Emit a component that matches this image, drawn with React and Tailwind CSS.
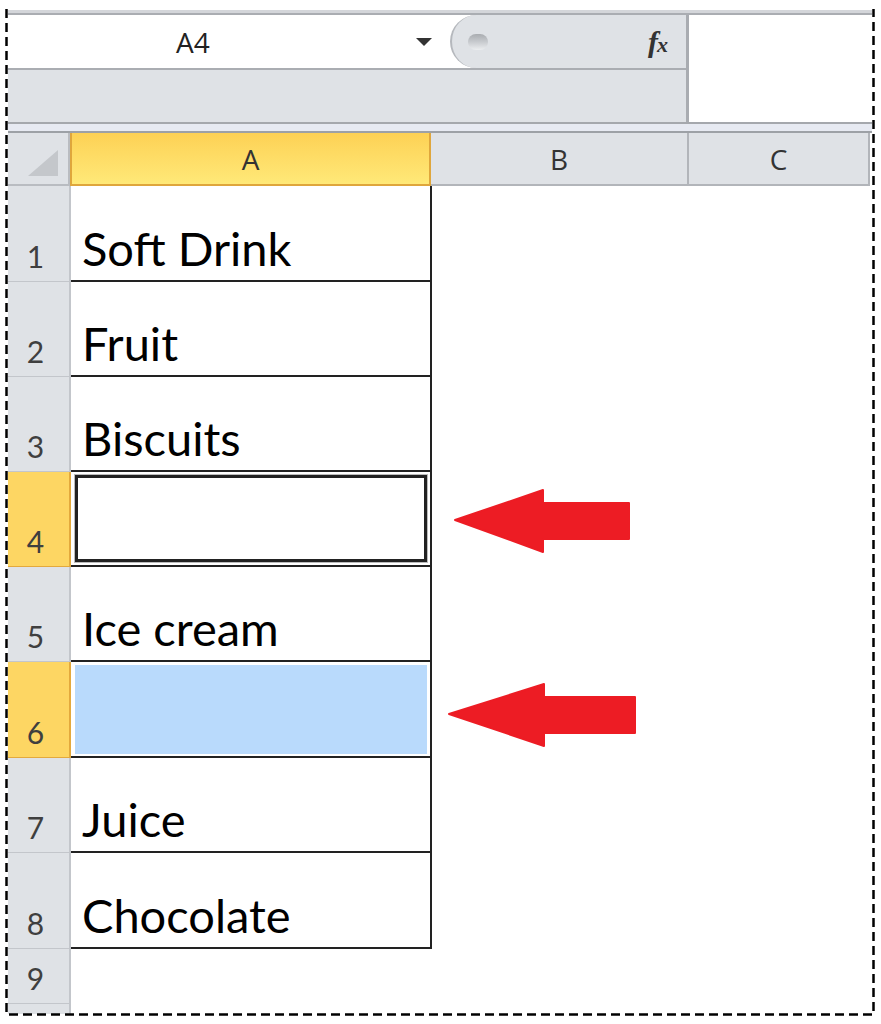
import React from 'react';

const rows = [
    { n: 1, text: 'Soft Drink', h: 'h-[96px]' },
    { n: 2, text: 'Fruit', h: 'h-[95px]' },
    { n: 3, text: 'Biscuits', h: 'h-[95px]' },
    { n: 4, text: '', active: true, h: 'h-[95px]' },
    { n: 5, text: 'Ice cream', h: 'h-[95px]' },
    { n: 6, text: '', selected: true, h: 'h-[96px]' },
    { n: 7, text: 'Juice', h: 'h-[95px]' },
    { n: 8, text: 'Chocolate', h: 'h-[96px]' },
];

// red pointer arrow, tail end given by `end`
function RedArrow({ className, end = 178, head = 90 }) {
    return (
        <svg className={className} width="200" height="70" viewBox="0 0 200 70">
            <path
                d={`M2 32 L${head} 2 L${head} 15 L${end} 15 L${end} 51 L${head} 51 L${head} 64 Z`}
                fill="#ed1c24"
                strokeLinejoin="round"
                stroke="#ed1c24"
                strokeWidth="2"
            />
        </svg>
    );
}

function RowHeader({ n, hot }) {
    return (
        <div
            className={`w-[63px] shrink-0 flex items-end justify-center pb-[10px] border-b border-r-2 ${
                hot ? 'bg-[#fdd663] border-[#e3a93d]' : 'bg-[#dfe2e6] border-[#c3c6cb]'
            }`}
        >
            <span className="text-[30px] leading-none text-[#3f3f3f] pr-[6px]" style={{ fontFamily: 'Lato, sans-serif' }}>
                {n}
            </span>
        </div>
    );
}

export default function App() {
    return (
        <div className="relative w-[881px] h-[1024px] bg-white pt-[8px] pl-[8px]">
            <div className="relative w-[864px] h-[1006px] flex flex-col" style={{ fontFamily: '"Open Sans", sans-serif' }}>
                <div className="h-[2px]" />
                <div className="h-[3px] bg-[#d4d6da]" />
                <div className="h-[2px] bg-[#aaadb2]" />

                {/* name box + formula bar */}
                <div className="h-[107px] flex">
                    <div className="w-[678px] flex flex-col">
                        <div className="h-[53px] flex">
                            <div className="w-[442px] bg-white flex items-center pl-[168px] pr-[18px]">
                                <span className="text-[28px] text-[#222]">A4</span>
                                <span className="ml-auto w-0 h-0 border-l-[8px] border-r-[8px] border-t-[8px] border-l-transparent border-r-transparent border-t-[#333]" />
                            </div>
                            <div className="flex-1 bg-[#dfe2e6] rounded-l-[28px] border-l-2 border-[#b5b8bd] flex items-center pl-[16px] pr-[18px]">
                                <span className="w-[20px] h-[16px] rounded-full bg-gradient-to-b from-[#a9acb0] via-[#c8cbcf] to-[#eceef0]" />
                                <span className="ml-auto flex items-baseline italic font-bold text-[#333]" style={{ fontFamily: '"Liberation Serif", serif' }}>
                                    <span className="text-[30px] leading-none">f</span>
                                    <span className="text-[22px] leading-none -ml-[1px]">x</span>
                                </span>
                            </div>
                        </div>
                        <div className="h-[2px] bg-[#aaadb2]" />
                        <div className="flex-1 bg-[#dfe2e6]" />
                    </div>
                    <div className="flex-1 bg-white border-l-[3px] border-[#a9acb1]" />
                </div>

                <div className="h-[2px] bg-[#a5a8ad]" />
                <div className="h-[7px] bg-[#e7eaf2]" />
                <div className="h-[2px] bg-[#9da1a6]" />

                {/* column headers */}
                <div className="h-[53px] flex text-[28px] text-[#333]">
                    <div className="w-[62px] bg-[#dfe2e6] border-b-2 border-r-2 border-[#b9bcc1] flex items-end justify-end pr-[10px] pb-[8px]">
                        <span className="w-0 h-0 border-l-[30px] border-b-[26px] border-l-transparent border-b-[#c4c7cb]" />
                    </div>
                    <div className="w-[361px] bg-gradient-to-b from-[#fdd154] to-[#ffe978] border-2 border-t-0 border-[#dfa63c] flex items-center justify-center">
                        A
                    </div>
                    <div className="w-[258px] bg-[#dfe2e6] border-b-2 border-r-2 border-[#b2b5ba] flex items-center justify-center">B</div>
                    <div className="w-[181px] bg-[#dfe2e6] border-b-2 border-r-2 border-[#b2b5ba] flex items-center justify-center">C</div>
                </div>

                {/* body */}
                {rows.map(r => (
                    <div key={r.n} className={`${r.h} flex`}>
                        <RowHeader n={r.n} hot={r.active || r.selected} />
                        <div className="w-[361px] border-r-2 border-b-2 border-[#222] bg-white flex items-end pl-[11px] pb-[8px]">
                            {r.active && (
                                <div className="w-[352px] h-[87px] -ml-[7px] mb-[-5px] border-[3px] border-[#222] outline outline-1 outline-[#bbb]" />
                            )}
                            {r.selected && (
                                <div className="w-[352px] h-[89px] -ml-[7px] mb-[-6px] bg-[#b9dafc]" />
                            )}
                            {r.text && (
                                <span className="text-[47px] leading-none text-black" style={{ fontFamily: 'Lato, sans-serif' }}>
                                    {r.text}
                                </span>
                            )}
                        </div>
                    </div>
                ))}

                <div className="h-[55px] flex">
                    <div className="w-[63px] bg-[#dfe2e6] border-b border-r-2 border-[#c3c6cb] flex items-end justify-center pb-[10px]">
                        <span className="text-[30px] leading-none text-[#3f3f3f] pr-[6px]" style={{ fontFamily: 'Lato, sans-serif' }}>9</span>
                    </div>
                </div>
                <div className="flex-1 flex">
                    <div className="w-[63px] bg-[#dfe2e6] border-r-2 border-[#c3c6cb]" />
                </div>

                <RedArrow className="absolute left-[445px] top-[480px]" end={176} head={90} />
                <RedArrow className="absolute left-[439px] top-[674px]" end={188} head={97} />
            </div>

            {/* dashed selection frame */}
            <svg className="absolute left-0 top-0 pointer-events-none" width="881" height="1024">
                <path d="M6.5 9 L6.5 1014.5 L873.5 1014.5 L873.5 9" fill="none" stroke="#000" strokeWidth="2.5" strokeDasharray="9 5" />
            </svg>
        </div>
    );
}
